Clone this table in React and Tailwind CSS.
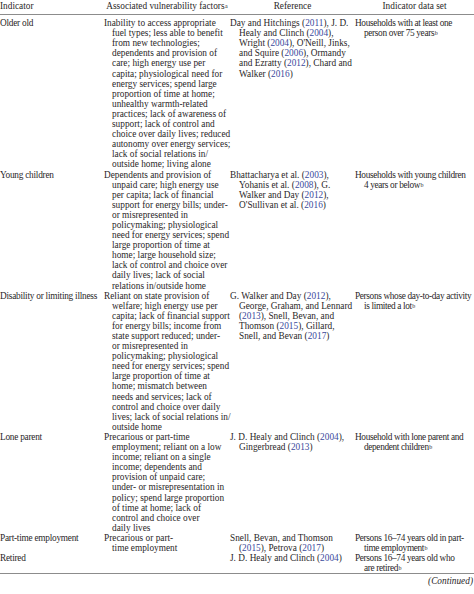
import React from "react";

const rows = [
  {
    label: "Older old",
    factors: [
      "Inability to access appropriate",
      "fuel types; less able to benefit",
      "from new technologies;",
      "dependents and provision of",
      "care; high energy use per",
      "capita; physiological need for",
      "energy services; spend large",
      "proportion of time at home;",
      "unhealthy warmth-related",
      "practices; lack of awareness of",
      "support; lack of control and",
      "choice over daily lives; reduced",
      "autonomy over energy services;",
      "lack of social relations in/",
      "outside home; living alone",
    ],
    refs: [
      "Day and Hitchings (2011), J. D.",
      "Healy and Clinch (2004),",
      "Wright (2004), O'Neill, Jinks,",
      "and Squire (2006), Ormandy",
      "and Ezratty (2012), Chard and",
      "Walker (2016)",
    ],
    data: ["Households with at least one", "person over 75 years"],
  },
  {
    label: "Young children",
    factors: [
      "Dependents and provision of",
      "unpaid care; high energy use",
      "per capita; lack of financial",
      "support for energy bills; under-",
      "or misrepresented in",
      "policymaking; physiological",
      "need for energy services; spend",
      "large proportion of time at",
      "home; large household size;",
      "lack of control and choice over",
      "daily lives; lack of social",
      "relations in/outside home",
    ],
    refs: [
      "Bhattacharya et al. (2003),",
      "Yohanis et al. (2008), G.",
      "Walker and Day (2012),",
      "O'Sullivan et al. (2016)",
    ],
    data: ["Households with young children", "4 years or below"],
  },
  {
    label: "Disability or limiting illness",
    factors: [
      "Reliant on state provision of",
      "welfare; high energy use per",
      "capita; lack of financial support",
      "for energy bills; income from",
      "state support reduced; under-",
      "or misrepresented in",
      "policymaking; physiological",
      "need for energy services; spend",
      "large proportion of time at",
      "home; mismatch between",
      "needs and services; lack of",
      "control and choice over daily",
      "lives; lack of social relations in/",
      "outside home",
    ],
    refs: [
      "G. Walker and Day (2012),",
      "George, Graham, and Lennard",
      "(2013), Snell, Bevan, and",
      "Thomson (2015), Gillard,",
      "Snell, and Bevan (2017)",
    ],
    data: ["Persons whose day-to-day activity", "is limited a lot"],
  },
  {
    label: "Lone parent",
    factors: [
      "Precarious or part-time",
      "employment; reliant on a low",
      "income; reliant on a single",
      "income; dependents and",
      "provision of unpaid care;",
      "under- or misrepresentation in",
      "policy; spend large proportion",
      "of time at home; lack of",
      "control and choice over",
      "daily lives",
    ],
    refs: ["J. D. Healy and Clinch (2004),", "Gingerbread (2013)"],
    data: ["Household with lone parent and", "dependent children"],
  },
  {
    label: "Part-time employment",
    factors: ["Precarious or part-", "time employment"],
    refs: ["Snell, Bevan, and Thomson", "(2015), Petrova (2017)"],
    data: ["Persons 16–74 years old in part-", "time employment"],
  },
  {
    label: "Retired",
    factors: [],
    refs: ["J. D. Healy and Clinch (2004)"],
    data: ["Persons 16–74 years old who", "are retired"],
  },
];

// years in the reference column are links
function RefLine({ text }) {
  const parts = text.split(/(\d{4})/);
  return (
    <>
      {parts.map((p, i) =>
        /^\d{4}$/.test(p) ? (
          <span key={i} className="text-[#3a4a9c]">{p}</span>
        ) : (
          <span key={i}>{p}</span>
        )
      )}
    </>
  );
}

function Lines({ lines, indent, render, sup, className = "" }) {
  return (
    <div className={className}>
      {lines.map((l, i) => (
        <div key={i} className={"whitespace-nowrap " + (i > 0 ? indent : "")}>
          {render ? render(l) : l}
          {sup && i === lines.length - 1 && (
            <sup className="text-[6px] relative -top-[1px] ml-[0.5px]">b</sup>
          )}
        </div>
      ))}
    </div>
  );
}

export default function App() {
  return (
    <div className="w-[474px] h-[594px] bg-white overflow-hidden text-[#2a2728] font-['Liberation_Serif',serif] text-[9.3px] leading-[10.1px]">
      <div className="grid grid-cols-[104px_126px_125px_119px] pt-[1px] pb-[3px] border-b-[1.5px] border-[#8c8c8c]">
        <div className="whitespace-nowrap">Indicator</div>
        <div className="text-center whitespace-nowrap">
          Associated vulnerability factors
          <sup className="text-[6px] relative -top-[1px] ml-[0.5px]">a</sup>
        </div>
        <div className="text-center">Reference</div>
        <div className="text-center whitespace-nowrap">Indicator data set</div>
      </div>

      <div className="pt-[3px]">
        {rows.map((r) => (
          <div key={r.label} className="grid grid-cols-[104px_126px_125px_119px]">
            <div className="whitespace-nowrap tracking-[-0.25px]">{r.label}</div>
            <Lines lines={r.factors} indent="pl-[8px]" />
            <Lines
              lines={r.refs}
              indent="pl-[9px]"
              render={(l) => <RefLine text={l} />}
            />
            <Lines
              lines={r.data}
              indent="pl-[9px]"
              sup
              className="tracking-[-0.35px]"
            />
          </div>
        ))}
      </div>

      <div className="border-b-[1.5px] border-[#8c8c8c]" />
      <div className="text-right italic pt-[2px] pr-[1px]">(Continued)</div>
    </div>
  );
}
